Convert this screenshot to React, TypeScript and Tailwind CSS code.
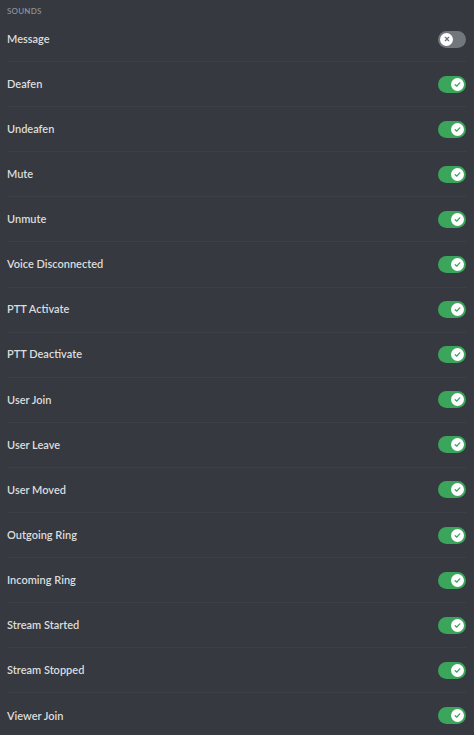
import React, { useState } from 'react';

const SOUNDS = [
  { label: 'Message', on: false },
  { label: 'Deafen', on: true },
  { label: 'Undeafen', on: true },
  { label: 'Mute', on: true },
  { label: 'Unmute', on: true },
  { label: 'Voice Disconnected', on: true },
  { label: 'PTT Activate', on: true },
  { label: 'PTT Deactivate', on: true },
  { label: 'User Join', on: true },
  { label: 'User Leave', on: true },
  { label: 'User Moved', on: true },
  { label: 'Outgoing Ring', on: true },
  { label: 'Incoming Ring', on: true },
  { label: 'Stream Started', on: true },
  { label: 'Stream Stopped', on: true },
  { label: 'Viewer Join', on: true },
];

function Toggle({ on, onClick }: { on: boolean; onClick: () => void }) {
  return (
    <button
      onClick={onClick}
      className={`w-[28px] h-[17px] rounded-full flex items-center px-[2px] ${
        on ? 'bg-[#3ba55c] justify-end' : 'bg-[#72767d] justify-start'
      }`}
    >
      <span className="w-[13px] h-[13px] rounded-full bg-white flex items-center justify-center">
        {on ? (
          <svg viewBox="0 0 12 12" className="w-[9px] h-[9px]">
            <path d="M3 6.2 L5.1 8.2 L9 3.8" fill="none" stroke="#3ba55c" strokeWidth="1.8" strokeLinecap="round" strokeLinejoin="round" />
          </svg>
        ) : (
          <svg viewBox="0 0 12 12" className="w-[8px] h-[8px]">
            <path d="M3.5 3.5 L8.5 8.5 M8.5 3.5 L3.5 8.5" fill="none" stroke="#72767d" strokeWidth="2" strokeLinecap="round" />
          </svg>
        )}
      </span>
    </button>
  );
}

export default function App() {
  const [sounds, setSounds] = useState(SOUNDS);

  return (
    <div
      className="w-[474px] h-[735px] overflow-hidden bg-[#36393f] pl-[7px] pr-[8px]"
      style={{ fontFamily: 'Lato, "Noto Sans", sans-serif' }}
    >
      {/* Header */}
      <div className="h-[17px] flex items-center pt-[4px] text-[8px] font-semibold tracking-wide text-[#8e9297]">
        SOUNDS
      </div>

      {/* Rows */}
      {sounds.map((s, i) => (
        <div
          key={s.label}
          className={`h-[45.1px] flex items-center justify-between ${
            i < sounds.length - 1 ? 'border-b border-[#3d4046]' : ''
          }`}
        >
          <span className="text-[11px] font-semibold text-[#dcddde]">{s.label}</span>
          <Toggle
            on={s.on}
            onClick={() =>
              setSounds((prev) => prev.map((p, j) => (j === i ? { ...p, on: !p.on } : p)))
            }
          />
        </div>
      ))}
    </div>
  );
}
